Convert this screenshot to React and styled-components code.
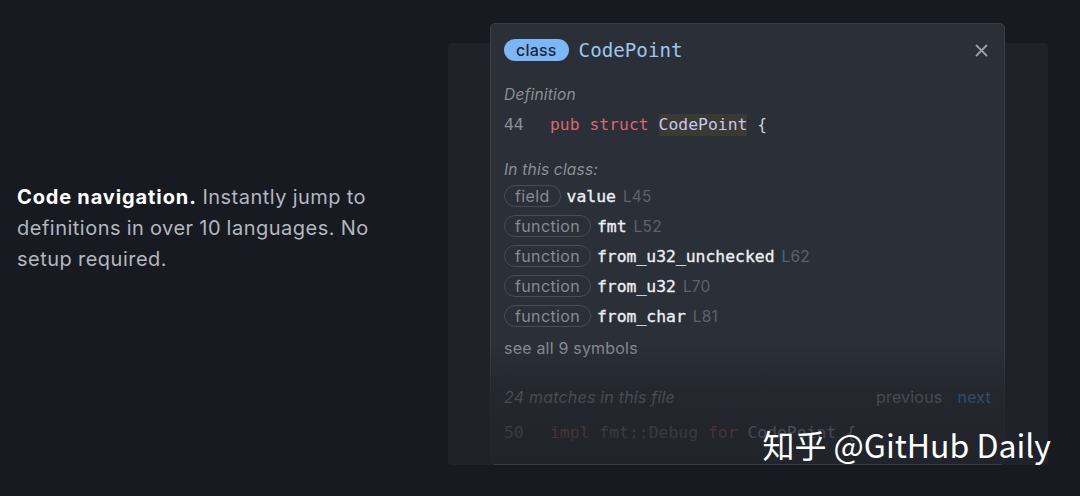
import React from "react";
import styled, { createGlobalStyle } from "styled-components";

const Global = createGlobalStyle`
  html, body { margin: 0; padding: 0; background: #181a21; }
  body { font-family: Inter, "Noto Sans", sans-serif; -webkit-font-smoothing: antialiased; }
`;

const Page = styled.div`
  position: relative;
  width: 1080px;
  height: 496px;
  display: flex;
  align-items: flex-start;
  overflow: hidden;
`;

const Intro = styled.div`
  width: 448px;
  box-sizing: border-box;
  padding: 182px 0 0 17px;
`;

const IntroText = styled.p`
  margin: 0;
  width: 385px;
  font-family: Inter, "Noto Sans", sans-serif;
  font-size: 20px;
  line-height: 31px;
  color: #b3b7bf;
  letter-spacing: 0.5px;
  word-spacing: -0.5px;
`;

const Strong = styled.strong`
  color: #ffffff;
  font-weight: 700;
  letter-spacing: 0.9px;
`;

const Stage = styled.div`
  margin-top: 23px;
  width: 600px;
  height: 442px;
  display: grid;
  overflow: hidden;
`;

const BackPanel = styled.div`
  grid-area: 1 / 1;
  margin-top: 20px;
  background: #1f2229;
  border-radius: 4px;
`;

const Card = styled.div`
  grid-area: 1 / 1;
  position: relative;
  margin: 0 43px 0 42px;
  background: #2b2f37;
  border: 1px solid #3a3e46;
  border-radius: 5px;
  padding: 14px 13px 0 13px;
  &::after {
    content: "";
    position: absolute;
    left: -1px;
    right: -1px;
    top: 320px;
    bottom: 0;
    background: linear-gradient(
      to bottom,
      rgba(31, 34, 41, 0) 0%,
      rgba(31, 34, 41, 0.6) 40%,
      rgba(31, 34, 41, 0.9) 100%
    );
    pointer-events: none;
  }
`;

const Header = styled.div`
  display: flex;
  align-items: center;
  height: 24px;
`;

const KindBadge = styled.span`
  display: inline-flex;
  align-items: center;
  height: 22px;
  padding: 0 12px;
  border-radius: 11px;
  background: #7db6f7;
  color: #1c2735;
  font-size: 16px;
  font-weight: 500;
  letter-spacing: 0.2px;
`;

const Title = styled.span`
  margin-left: 10px;
  font-family: "DejaVu Sans Mono", monospace;
  font-size: 19.2px;
  color: #9cc6f2;
`;

const Close = styled.button`
  margin-left: auto;
  margin-right: 2px;
  width: 16px;
  height: 16px;
  padding: 0;
  border: 0;
  background: none;
  display: flex;
  align-items: center;
  justify-content: center;
`;

const Label = styled.div`
  margin-top: ${(p) => p.$top}px;
  font-size: 15.5px;
  font-style: italic;
  color: #8a8f98;
  line-height: 20px;
  letter-spacing: 0.2px;
`;

const CodeLine = styled.div`
  margin-top: ${(p) => p.$top}px;
  display: flex;
  align-items: center;
  font-family: "DejaVu Sans Mono", monospace;
  font-size: 16.4px;
  line-height: 22px;
  white-space: pre;
`;

const LineNo = styled.span`
  width: 46px;
  color: #8a8f98;
`;

const Tok = styled.span`
  color: ${(p) => p.$c};
  background: ${(p) => p.$bg || "transparent"};
`;

const Rows = styled.div`
  margin-top: 5px;
  display: flex;
  flex-direction: column;
  gap: 8px;
`;

const Row = styled.div`
  display: flex;
  align-items: center;
  height: 22px;
`;

const SymKind = styled.span`
  display: inline-flex;
  align-items: center;
  height: 20px;
  padding: 0 10px;
  border: 1px solid #474c55;
  border-radius: 11px;
  font-size: 16px;
  letter-spacing: 0.35px;
  color: #868b94;
`;

const SymName = styled.span`
  margin-left: 6px;
  font-family: "DejaVu Sans Mono", monospace;
  font-size: 16.4px;
  color: #eceef3;
  -webkit-text-stroke: 0.35px #eceef3;
`;

const SymLine = styled.span`
  margin-left: 7px;
  font-size: 15.5px;
  letter-spacing: 0.2px;
  color: #5d626b;
`;

const SeeAll = styled.div`
  margin-top: 11px;
  font-size: 16px;
  letter-spacing: 0.2px;
  color: #8a8f98;
  line-height: 20px;
`;

const MatchBar = styled.div`
  margin-top: 29px;
  display: flex;
  align-items: center;
  font-size: 16px;
  letter-spacing: 0.2px;
  line-height: 20px;
`;

const Matches = styled.span`
  font-style: italic;
  color: #8a8f98;
`;

const NavLink = styled.span`
  margin-left: ${(p) => (p.$first ? "auto" : "15px")};
  color: ${(p) => (p.$active ? "#4d8fe0" : "#8a8f98")};
`;

const Watermark = styled.div`
  position: absolute;
  right: 29px;
  bottom: 32px;
  font-family: "Noto Sans CJK SC", "Noto Sans", sans-serif;
  font-size: 32px;
  line-height: 40px;
  color: #ffffff;
  letter-spacing: 0px;
`;

const symbols = [
  { kind: "field", name: "value", line: "L45" },
  { kind: "function", name: "fmt", line: "L52" },
  { kind: "function", name: "from_u32_unchecked", line: "L62" },
  { kind: "function", name: "from_u32", line: "L70" },
  { kind: "function", name: "from_char", line: "L81" },
];

export default function App() {
  return (
    <>
      <Global />
      <Page>
        <Intro>
          <IntroText>
            <Strong>Code navigation.</Strong> Instantly jump to definitions in
            over 10 languages. No setup required.
          </IntroText>
        </Intro>
        <Stage>
          <BackPanel />
          <Card>
            <Header>
              <KindBadge>class</KindBadge>
              <Title>CodePoint</Title>
              <Close aria-label="close">
                <svg width="13" height="13" viewBox="0 0 13 13">
                  <path d="M1.5 1.5 L11.5 11.5 M11.5 1.5 L1.5 11.5" stroke="#9ba0a8" strokeWidth="1.8" strokeLinecap="round" />
                </svg>
              </Close>
            </Header>
            <Label $top={23}>Definition</Label>
            <CodeLine $top={9}>
              <LineNo>44</LineNo>
              <Tok $c="#d8676f">pub struct </Tok>
              <Tok $c="#c9c6ee" $bg="#3a3a33">CodePoint</Tok>
              <Tok $c="#c9ccd4"> {"{"}</Tok>
            </CodeLine>
            <Label $top={24}>In this class:</Label>
            <Rows>
              {symbols.map((s) => (
                <Row key={s.name}>
                  <SymKind>{s.kind}</SymKind>
                  <SymName>{s.name}</SymName>
                  <SymLine>{s.line}</SymLine>
                </Row>
              ))}
            </Rows>
            <SeeAll>see all 9 symbols</SeeAll>
            <MatchBar>
              <Matches>24 matches in this file</Matches>
              <NavLink $first>previous</NavLink>
              <NavLink $active>next</NavLink>
            </MatchBar>
            <CodeLine $top={15}>
              <LineNo>50</LineNo>
              <Tok $c="#d8676f">impl </Tok>
              <Tok $c="#8a8f98">fmt::Debug </Tok>
              <Tok $c="#d8676f">for </Tok>
              <Tok $c="#c9c6ee">CodePoint</Tok>
              <Tok $c="#c9ccd4"> {"{"}</Tok>
            </CodeLine>
          </Card>
        </Stage>
        <Watermark>知乎 @GitHub Daily</Watermark>
      </Page>
    </>
  );
}
